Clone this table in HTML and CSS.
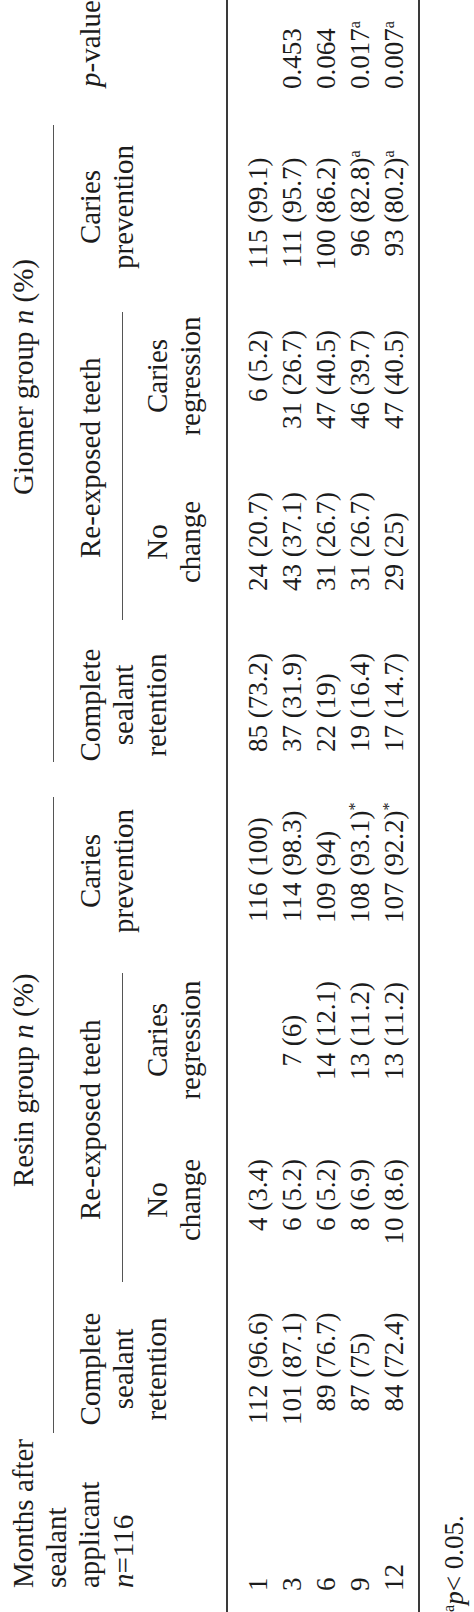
FILE: index.html
```html
<!DOCTYPE html>
<html lang="en">
<head>
<meta charset="utf-8">
<title>Sealant retention and caries prevention</title>
<link rel="stylesheet" href="styles.css">
</head>
<body>
<div class="frame">
<div class="page">
  <div class="tbl">
    <div class="thead">
      <div class="h h-months">Months after sealant applicant <i>n</i>=116</div>
      <div class="h h-group h-resin">Resin group <i>n</i> (%)</div>
      <div class="h h-group h-giomer">Giomer group <i>n</i> (%)</div>

      <div class="h h-b h-rcomp">Complete<br>sealant<br>retention</div>
      <div class="h h-b h-rexp">Re-exposed teeth</div>
      <div class="h h-b h-rprev">Caries<br>prevention</div>
      <div class="h h-b h-gcomp">Complete<br>sealant<br>retention</div>
      <div class="h h-b h-gexp">Re-exposed teeth</div>
      <div class="h h-b h-gprev">Caries<br>prevention</div>
      <div class="h h-b h-pval"><i>p</i>-value</div>

      <div class="h h-c h-rno">No<br>change</div>
      <div class="h h-c h-rreg">Caries<br>regression</div>
      <div class="h h-c h-gno">No<br>change</div>
      <div class="h h-c h-greg">Caries<br>regression</div>
    </div>
    <div class="rule"></div>
    <div class="tbody">
      <div class="row">
        <div class="d d1">1</div>
        <div class="d d2"><span class="n">112</span> (96.6)</div>
        <div class="d d3">4 (3.4)</div>
        <div class="d d4"></div>
        <div class="d d5"><span class="n">116</span> (100)</div>
        <div class="d d6">85 (73.2)</div>
        <div class="d d7">24 (20.7)</div>
        <div class="d d8">6 (5.2)</div>
        <div class="d d9"><span class="n">115</span> (99.1)</div>
        <div class="d d10"></div>
      </div>
      <div class="row">
        <div class="d d1">3</div>
        <div class="d d2"><span class="n">101</span> (87.1)</div>
        <div class="d d3">6 (5.2)</div>
        <div class="d d4"><span class="n">7</span> (6)</div>
        <div class="d d5"><span class="n">114</span> (98.3)</div>
        <div class="d d6">37 (31.9)</div>
        <div class="d d7">43 (37.1)</div>
        <div class="d d8">31 (26.7)</div>
        <div class="d d9"><span class="n">111</span> (95.7)</div>
        <div class="d d10">0.453</div>
      </div>
      <div class="row">
        <div class="d d1">6</div>
        <div class="d d2"><span class="n">89</span> (76.7)</div>
        <div class="d d3">6 (5.2)</div>
        <div class="d d4"><span class="n">14</span> (12.1)</div>
        <div class="d d5"><span class="n">109</span> (94)</div>
        <div class="d d6">22 (19)</div>
        <div class="d d7">31 (26.7)</div>
        <div class="d d8">47 (40.5)</div>
        <div class="d d9"><span class="n">100</span> (86.2)</div>
        <div class="d d10">0.064</div>
      </div>
      <div class="row">
        <div class="d d1">9</div>
        <div class="d d2"><span class="n">87</span> (75)</div>
        <div class="d d3">8 (6.9)</div>
        <div class="d d4"><span class="n">13</span> (11.2)</div>
        <div class="d d5"><span class="n">108</span> (93.1)<sup>*</sup></div>
        <div class="d d6">19 (16.4)</div>
        <div class="d d7">31 (26.7)</div>
        <div class="d d8">46 (39.7)</div>
        <div class="d d9"><span class="n">96</span> (82.8)<sup>a</sup></div>
        <div class="d d10">0.017<sup>a</sup></div>
      </div>
      <div class="row">
        <div class="d d1">12</div>
        <div class="d d2"><span class="n">84</span> (72.4)</div>
        <div class="d d3">10 (8.6)</div>
        <div class="d d4"><span class="n">13</span> (11.2)</div>
        <div class="d d5"><span class="n">107</span> (92.2)<sup>*</sup></div>
        <div class="d d6">17 (14.7)</div>
        <div class="d d7">29 (25)</div>
        <div class="d d8">47 (40.5)</div>
        <div class="d d9"><span class="n">93</span> (80.2)<sup>a</sup></div>
        <div class="d d10">0.007<sup>a</sup></div>
      </div>
    </div>
    <div class="rule"></div>
  </div>
  <p class="note"><sup>a</sup><i>p</i>&lt; 0.05.</p>
</div>
</div>
</body>
</html>
```

FILE: styles.css
```css
html {
  background: #ffffff;
}

body {
  margin: 0;
  padding: 0;
}

.frame {
  width: 474px;
  height: 1612px;
  overflow: hidden;
}

.page {
  width: 1612px;
  height: 474px;
  overflow: hidden;
  transform-origin: 0 0;
  transform: translateY(1612px) rotate(-90deg);
  font-family: "Liberation Serif", "Times New Roman", serif;
  color: #1c1c1c;
  background: #ffffff;
}

.tbl {
  width: 1627px;
}

.thead,
.row {
  display: grid;
  grid-template-columns: 179px 151px 155px 154px 176px 35px 142px 154px 154px 187px 140px;
}

.thead {
  grid-template-rows: 54px 69px 103px;
}

.h {
  font-size: 29px;
  line-height: 33.33px;
  white-space: nowrap;
}

.h-months {
  grid-row: 1 / 4;
  grid-column: 1;
  padding: 6.55px 0 0 24px;
  white-space: normal;
}

.h-group {
  grid-row: 1;
  padding-top: 6.55px;
  border-bottom: 1.5px solid #555555;
}

.h-resin {
  grid-column: 2 / 6;
  padding-left: 246px;
}

.h-giomer {
  grid-column: 7 / 11;
  padding-left: 267px;
}

.h-b {
  grid-row: 2 / 4;
  padding-top: 19.55px;
  text-align: center;
}

.h-c {
  grid-row: 3;
  padding-top: 17.55px;
  text-align: center;
}

.h-rcomp { grid-column: 2; padding-right: 23px; }
.h-rexp {
  grid-row: 2;
  grid-column: 3 / 5;
  text-align: left;
  padding-left: 62px;
  border-bottom: 1.5px solid #555555;
}
.h-rprev { grid-column: 5; padding-left: 28px; }
.h-gcomp { grid-column: 7; padding-right: 28px; }
.h-gexp {
  grid-row: 2;
  grid-column: 8 / 10;
  text-align: left;
  padding-left: 62px;
  border-bottom: 1.5px solid #555555;
}
.h-gprev { grid-column: 10; padding-left: 23px; }
.h-pval { grid-column: 11; text-align: left; padding-left: 38px; }

.h-rno { grid-column: 3; padding-left: 9px; }
.h-rreg { grid-column: 4; padding-left: 20px; }
.h-gno { grid-column: 8; padding-left: 2px; }
.h-greg { grid-column: 9; padding-left: 26px; }

.rule {
  height: 2px;
  background: #3a3a3a;
}

.tbody {
  padding: 12.9px 0 7.1px;
}

.row {
  height: 34px;
}

.d {
  font-size: 27px;
  line-height: 34px;
  white-space: nowrap;
}

.n {
  display: inline-block;
  width: 1.5em;
  text-align: right;
}

.d1 { padding-left: 21px; }
.d2 { padding-left: 8px; }
.d3 { text-align: right; padding-right: 32px; }
.d4 { padding-left: 33.5px; }
.d5 { padding-left: 50px; }
.d6 { grid-column: 7; padding-left: 10px; }
.d7 { padding-left: 29px; }
.d8 { text-align: right; padding-right: 18px; }
.d9 { padding-left: 42px; }
.d10 { padding-left: 36px; }

sup {
  font-size: 0.6em;
  line-height: 0;
  vertical-align: 0.55em;
}

.note {
  margin: 16.7px 0 0;
  font-size: 27px;
  line-height: 34px;
  white-space: nowrap;
}
```
